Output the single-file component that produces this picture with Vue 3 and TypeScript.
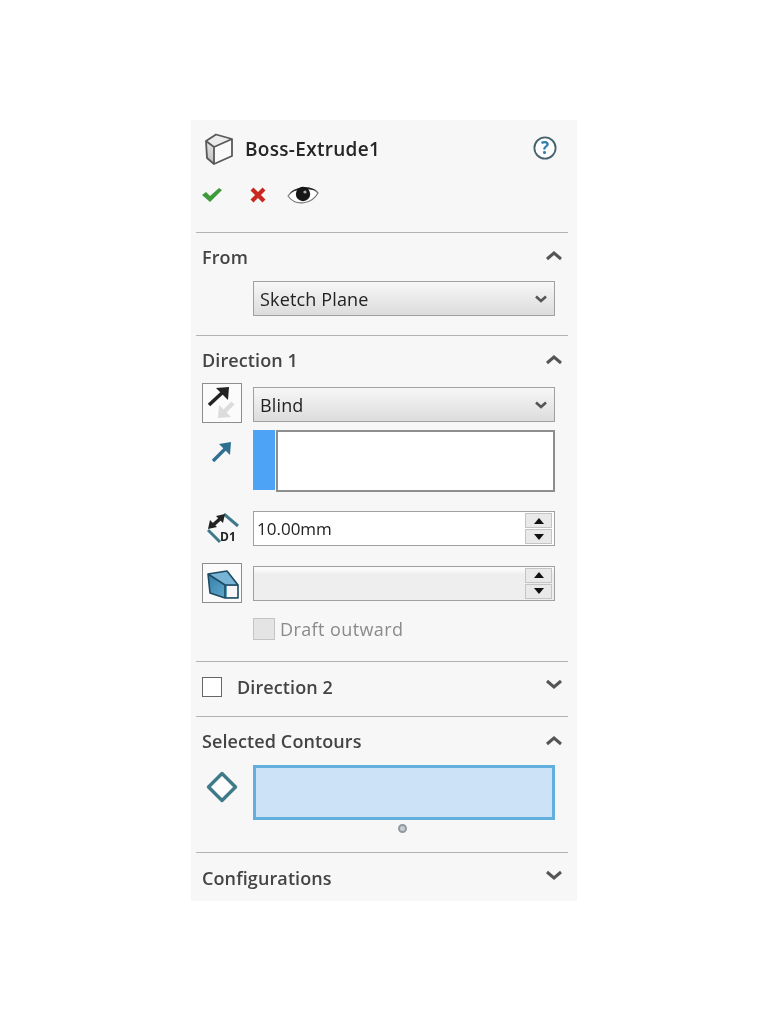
<script setup lang="ts">
interface Spin {
  value: string
  disabled?: boolean
}

const depth: Spin = { value: '10.00mm' }
const draft: Spin = { value: '', disabled: true }
</script>

<template>
  <div class="panel">
    <header class="top">
      <div class="title-row">
        <svg class="cube" viewBox="0 0 30 32" width="30" height="32">
          <defs>
            <linearGradient id="cube-side" x1="0" y1="0" x2="0" y2="1">
              <stop offset="0" stop-color="#e6e6e6" />
              <stop offset="1" stop-color="#bdbdbd" />
            </linearGradient>
          </defs>
          <path d="M3 8 11 14V31L4 25Z" fill="url(#cube-side)" />
          <path d="M3 8 13 1.5 29 6 11 14Z" fill="#ececec" />
          <path d="M11 14 29 6V23L11 31Z" fill="#f9f9f9" />
          <path d="M3 8 13 1.5 29 6V23L11 31 4 25ZM3 8 11 14 29 6M11 14V31" fill="none" stroke="#585858" stroke-width="1.8" stroke-linejoin="round" />
        </svg>
        <span class="title">Boss-Extrude1</span>
        <svg class="help" viewBox="0 0 24 24" width="24" height="24">
          <circle cx="12" cy="12" r="10.6" fill="#fdfdfd" stroke="#47626f" stroke-width="1.8" />
          <text x="12" y="18" text-anchor="middle" class="help-mark">?</text>
        </svg>
      </div>
      <div class="action-row">
        <svg viewBox="0 0 22 18" width="22" height="18">
          <path d="M1 9 5 6 9 10 18 2 21 4 9 16Z" fill="#3f9a3c" />
        </svg>
        <svg class="cancel" viewBox="0 0 18 18" width="18" height="18">
          <path d="M3 3 15 15M15 3 3 15" stroke="#c8281e" stroke-width="4.2" />
        </svg>
        <svg class="eye" viewBox="0 0 32 24" width="32" height="24">
          <path d="M1 13C7 4 24 2 31 10 25 21 9 24 1 13Z" fill="#fff" stroke="#777" stroke-width="1.2" />
          <path d="M2 11C9 3 23 2 31 9 26 5 8 5 2 11Z" fill="#222" />
          <circle cx="16" cy="11" r="7.2" fill="#161616" />
          <circle cx="18" cy="9" r="1.6" fill="#aaa" />
        </svg>
      </div>
    </header>

    <section class="group group-from">
      <div class="head">
        <span>From</span>
        <svg class="chevron" viewBox="0 0 18 10" width="18" height="10"><path d="M2 8 9 2 16 8" /></svg>
      </div>
      <div class="row">
        <div class="select"><span>Sketch Plane</span><svg viewBox="0 0 12 8" width="12" height="8"><path d="M1 1.5 6 6 11 1.5" /></svg></div>
      </div>
    </section>

    <section class="group group-dir">
      <div class="head">
        <span>Direction 1</span>
        <svg class="chevron" viewBox="0 0 18 10" width="18" height="10"><path d="M2 8 9 2 16 8" /></svg>
      </div>
      <div class="row gap-7">
        <button class="icon-box flip">
          <svg viewBox="0 0 38 38" width="38" height="38">
            <path d="M30 19 19 30" stroke="#dcdcdc" stroke-width="4.5" />
            <path d="M15 34 16 21 28 33Z" fill="#dcdcdc" />
            <path d="M6 21 20 8" stroke="#222" stroke-width="3.6" />
            <path d="M13 4 26 3 25 16Z" fill="#222" />
          </svg>
        </button>
        <div class="select"><span>Blind</span><svg viewBox="0 0 12 8" width="12" height="8"><path d="M1 1.5 6 6 11 1.5" /></svg></div>
      </div>
      <div class="row gap-19 row-list">
        <svg class="side-icon arrow" viewBox="0 0 22 22" width="22" height="22">
          <path d="M2 20 15 7" stroke="#2f6f8f" stroke-width="3.4" />
          <path d="M8 3 20 1 19 14Z" fill="#2f6f8f" />
        </svg>
        <div class="list">
          <div class="list-swatch"></div>
          <div class="list-box"></div>
        </div>
      </div>
      <div class="row gap-17">
        <svg class="side-icon dim" viewBox="0 0 34 32" width="34" height="32">
          <path d="M17 1 31 13M1 17 13 29" fill="none" stroke="#3f7a8a" stroke-width="3" />
          <path d="M5 13 14 5" stroke="#222" stroke-width="3.6" />
          <path d="M1 16 3 7 10 14ZM18 1 16 10 9 3Z" fill="#222" />
          <text x="13" y="28" class="d1">D1</text>
        </svg>
        <div class="spin">
          <span class="spin-value">{{ depth.value }}</span>
          <div class="spin-buttons">
            <i class="up"></i>
            <i class="down"></i>
          </div>
        </div>
      </div>
      <div class="row gap-14">
        <button class="icon-box">
          <svg viewBox="0 0 38 38" width="38" height="38">
            <defs>
              <linearGradient id="draft-front" x1="0" y1="0" x2="1" y2="1">
                <stop offset="0" stop-color="#2f7ca6" />
                <stop offset="1" stop-color="#6fb2d6" />
              </linearGradient>
            </defs>
            <path d="M5 10 24 7 35 21V34H22L7 29Z" fill="url(#draft-front)" />
            <path d="M5 10 24 7 34 21 22 21Z" fill="#78b4d6" />
            <path d="M24 22H35V33H24Z" fill="#f7f7f7" />
            <path d="M5 10 24 7 35 21V34H22L7 29ZM5 10 22 21V34M22 21H35" fill="none" stroke="#1f4a60" stroke-width="1.6" stroke-linejoin="round" />
          </svg>
        </button>
        <div class="spin spin-off">
          <span class="spin-value">{{ draft.value }}</span>
          <div class="spin-buttons">
            <i class="up"></i>
            <i class="down"></i>
          </div>
        </div>
      </div>
      <label class="row draft">
        <span class="check-off"></span>
        <span>Draft outward</span>
      </label>
    </section>

    <section class="group group-closed">
      <div class="head head-check">
        <span class="check"></span>
        <span class="check-label">Direction 2</span>
        <svg class="chevron" viewBox="0 0 18 10" width="18" height="10"><path d="M2 2 9 8 16 2" /></svg>
      </div>
    </section>

    <section class="group group-contours">
      <div class="head">
        <span>Selected Contours</span>
        <svg class="chevron" viewBox="0 0 18 10" width="18" height="10"><path d="M2 8 9 2 16 8" /></svg>
      </div>
      <div class="row row-list">
        <svg class="side-icon diamond" viewBox="0 0 32 32" width="32" height="32">
          <path d="M16 2.5 29.5 16 16 29.5 2.5 16Z" fill="#fdfdfd" stroke="#3f7a8a" stroke-width="3.4" stroke-linejoin="round" />
        </svg>
        <div class="contours"></div>
      </div>
      <div class="grip"></div>
    </section>

    <section class="group group-closed group-last">
      <div class="head">
        <span>Configurations</span>
        <svg class="chevron" viewBox="0 0 18 10" width="18" height="10"><path d="M2 2 9 8 16 2" /></svg>
      </div>
    </section>
  </div>
</template>

<style scoped>
.panel {
  background: #f7f7f7;
  box-sizing: border-box;
  color: #2f2f2f;
  filter: blur(0.35px);
  font-family: "Open Sans", "Noto Sans", sans-serif;
  height: 781px;
  margin: 120px 0 0 191px;
  overflow: hidden;
  width: 386px;
}

.top {
  height: 112px;
  padding: 13px 0 0 12px;
  box-sizing: border-box;
}

.title-row {
  align-items: center;
  display: flex;
  height: 32px;
}

.title {
  color: #252525;
  font-size: 19px;
  font-weight: 600;
  letter-spacing: 0.3px;
  margin-left: 12px;
}

.help {
  margin-left: auto;
  margin-right: 20px;
  margin-top: -2px;
}

.action-row {
  align-items: center;
  display: flex;
  height: 24px;
  margin: 18px 0 0 -2px;
}

.cancel {
  margin-left: 26px;
}

.eye {
  margin-left: 20px;
}

.group {
  border-top: 1px solid #b3b3b3;
  box-sizing: border-box;
  margin: 0 9px 0 5px;
}

.group-from {
  height: 103px;
}

.group-dir {
  height: 326px;
}

.group-closed {
  height: 55px;
}

.group-contours {
  height: 136px;
}

.group-last {
  height: 49px;
}

.head {
  align-items: center;
  box-sizing: border-box;
  color: #444;
  display: flex;
  font-size: 18px;
  font-weight: 600;
  height: 48px;
  justify-content: space-between;
  letter-spacing: 0.1px;
  padding: 0 5px 0 6px;
}

.group-dir .head {
  height: 50px;
  padding-bottom: 3px;
}

.group-closed .head {
  height: 49px;
}

.head-check {
  justify-content: flex-start;
}

.head-check .chevron {
  margin-left: auto;
}

.check {
  background: #fff;
  border: 1.5px solid #666;
  box-sizing: border-box;
  height: 20px;
  margin-right: 15px;
  width: 20px;
}

.chevron {
  fill: none;
  stroke: #555;
  stroke-width: 3;
}

.group-from .chevron {
  margin-top: -2px;
}

.group-closed .chevron {
  margin-top: -6px;
}

.row {
  align-items: center;
  display: flex;
  margin-left: 6px;
  margin-right: 13px;
}

.row > .select,
.row > .spin,
.row > .list,
.row > .contours {
  margin-left: auto;
  width: 302px;
}

.gap-7 {
  margin-bottom: 7px;
}

.gap-14 {
  margin-bottom: 14px;
}

.gap-17 {
  margin-bottom: 17px;
}

.gap-19 {
  margin-bottom: 19px;
}

.row-list {
  align-items: flex-start;
}

.select {
  align-items: center;
  background: linear-gradient(#f7f7f7, #dcdcdc);
  border: 1px solid #a0a0a0;
  box-sizing: border-box;
  color: #222;
  display: flex;
  font-size: 18px;
  height: 35px;
  justify-content: space-between;
  letter-spacing: 0.15px;
  padding: 0 7px 0 6px;
}

.select svg {
  fill: none;
  stroke: #555;
  stroke-width: 2.6;
}

.icon-box {
  align-items: center;
  background: #fbfbfb;
  border: 1.5px solid #8d8d8d;
  box-sizing: border-box;
  display: flex;
  height: 40px;
  justify-content: center;
  padding: 0;
  width: 40px;
}

.flip {
  margin-top: -3px;
}

.side-icon {
  flex: none;
}

.arrow {
  margin: 11px 0 0 9px;
}

.dim {
  margin-left: 5px;
}

.list {
  display: flex;
  height: 62px;
}

.list-swatch {
  background: #4da3f5;
  height: 60px;
  margin-right: 1px;
  width: 22px;
}

.list-box {
  background: #fff;
  border: 2px solid #8e8e8e;
  box-sizing: border-box;
  flex: 1;
}

.spin {
  align-items: center;
  background: #fff;
  border: 1.5px solid #a0a0a0;
  box-sizing: border-box;
  display: flex;
  height: 35px;
  justify-content: space-between;
  padding: 0 2px 0 3px;
}

.spin-off {
  background: linear-gradient(#fafafa 8%, #eeeeee 22%);
}

.spin-value {
  color: #222;
  font-size: 17px;
}

.spin-buttons {
  display: flex;
  flex-direction: column;
  gap: 1px;
  width: 27px;
}

.spin-buttons i {
  align-items: center;
  background: #e9e9e9;
  border: 1px solid #c4c4c4;
  box-sizing: border-box;
  display: flex;
  height: 15px;
  justify-content: center;
}

.spin-buttons i::before {
  border-left: 5px solid transparent;
  border-right: 5px solid transparent;
  content: "";
}

.up::before {
  border-bottom: 6px solid #111;
}

.down::before {
  border-top: 6px solid #111;
}

.draft {
  color: #8a8a8a;
  font-size: 18px;
  letter-spacing: 0.4px;
  margin-left: 57px;
}

.check-off {
  background: #e4e4e4;
  border: 1px solid #c4c4c4;
  box-sizing: border-box;
  height: 22px;
  margin-right: 5px;
  width: 22px;
}

.contours {
  background: #cce2f6;
  border: 3px solid #62aedd;
  box-sizing: border-box;
  height: 55px;
}

.diamond {
  margin: 6px 0 0 4px;
}

.grip {
  background: #c9ced3;
  border: 2px solid #8f9aa3;
  border-radius: 50%;
  box-sizing: border-box;
  height: 9px;
  margin: 4px 0 0 202px;
  width: 9px;
}
</style>

<style>
html,
body {
  background: #fff;
}

.help-mark {
  fill: #2f7fae;
  font-family: "Open Sans", sans-serif;
  font-size: 17px;
  font-weight: 700;
}

.d1 {
  fill: #222;
  font-family: "Open Sans", sans-serif;
  font-size: 12px;
  font-weight: 700;
}
</style>
